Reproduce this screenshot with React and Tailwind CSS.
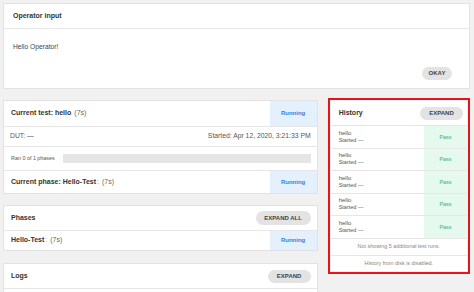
import React from "react";

const font = { fontFamily: '"Liberation Sans", Arial, sans-serif' };

const Pill = ({ children, className = "" }) => (
  <span
    className={`flex items-center justify-center rounded-full bg-[#e3e3e3] text-[6px] font-bold text-[#444] ${className}`}
  >
    {children}
  </span>
);

const Running = ({ className = "" }) => (
  <div
    className={`flex w-[47px] items-center justify-center bg-[#e4f0fd] text-[6px] font-bold text-[#3e7dd6] ${className}`}
  >
    Running
  </div>
);

const HistoryRow = () => (
  <div className="flex h-[22.5px] border-b border-[#e6e6e6]">
    <div className="flex flex-1 flex-col justify-center pl-[8px] leading-[7px] text-[#555]">
      <span className="text-[6px]">hello</span>
      <span className="text-[5.5px]">Started —</span>
    </div>
    <div className="flex w-[43px] items-center justify-center bg-[#e6f9ef] text-[5.5px] text-[#3bb273]">
      Pass
    </div>
  </div>
);

export default function App() {
  return (
    <div
      className="h-[292px] w-[474px] overflow-hidden bg-[#f1f1f1] pl-[3px] pr-[4px] pt-[3px]"
      style={font}
    >
      {/* operator input */}
      <div className="border border-[#e2e2e2] bg-white">
        <div className="flex h-[25px] items-center border-b border-[#e6e6e6] px-[9px] text-[7px] font-bold text-[#333]">
          Operator input
        </div>
        <div className="flex h-[59px] flex-col px-[9px]">
          <div className="pt-[13px] text-[6.7px] text-[#444]">Hello Operator!</div>
          <div className="mt-auto mb-[8px] flex justify-end pr-[8px]">
            <Pill className="h-[13px] w-[30px]">OKAY</Pill>
          </div>
        </div>
      </div>

      <div className="mt-[9px] flex">
        {/* left column */}
        <div className="w-[316px] pt-[2px]">
          <div className="border border-[#e2e2e2] bg-white">
            <div className="flex h-[26px] border-b border-[#e6e6e6]">
              <div className="flex flex-1 items-center px-[7px] text-[7px] text-[#333]">
                <span className="font-bold">Current test: hello</span>
                <span className="ml-[3px] text-[#666]">(7s)</span>
              </div>
              <Running />
            </div>
            <div className="flex h-[20px] items-center justify-between border-b border-[#e6e6e6] px-[6px] text-[6.8px] text-[#555]">
              <span>DUT: —</span>
              <span>Started: Apr 12, 2020, 3:21:33 PM</span>
            </div>
            <div className="flex h-[24px] items-center border-b border-[#e6e6e6] pl-[7px] pr-[6px]">
              <span className="w-[52px] text-[5.4px] text-[#555]">Ran 0 of 1 phases</span>
              <div className="h-[9px] flex-1 bg-[#e5e5e5]"></div>
            </div>
            <div className="flex h-[22px]">
              <div className="flex flex-1 items-center px-[7px] text-[7px] text-[#333]">
                <span className="font-bold">Current phase: Hello-Test</span>
                <span className="ml-[1px] text-[#999]">:</span>
                <span className="ml-[3px] text-[#666]">(7s)</span>
              </div>
              <Running />
            </div>
          </div>

          <div className="mt-[11px] border border-[#e2e2e2] bg-white">
            <div className="flex h-[25px] items-center justify-between border-b border-[#e6e6e6] pl-[7px] pr-[6px]">
              <span className="text-[7px] font-bold text-[#333]">Phases</span>
              <Pill className="h-[14px] w-[55px]">EXPAND ALL</Pill>
            </div>
            <div className="flex h-[19px]">
              <div className="flex flex-1 items-center px-[7px] text-[7px] text-[#333]">
                <span className="font-bold">Hello-Test</span>
                <span className="ml-[1px] text-[#999]">:</span>
                <span className="ml-[3px] text-[#666]">(7s)</span>
              </div>
              <Running />
            </div>
          </div>

          <div className="mt-[12px] border border-[#e2e2e2] bg-white">
            <div className="flex h-[25px] items-center justify-between border-b border-[#e6e6e6] pl-[7px] pr-[6px]">
              <span className="text-[7px] font-bold text-[#333]">Logs</span>
              <Pill className="h-[13px] w-[43px]">EXPAND</Pill>
            </div>
            <div className="h-[20px]"></div>
          </div>
        </div>

        {/* history, highlighted */}
        <div className="ml-[10px] w-[143px]">
          <div className="border-[2px] border-[#e3141c] p-[1px]">
            <div className="bg-white">
              <div className="flex h-[25px] items-center justify-between border-b border-[#e6e6e6] pl-[8px] pr-[4px]">
                <span className="text-[7px] font-bold text-[#333]">History</span>
                <Pill className="h-[13px] w-[43px]">EXPAND</Pill>
              </div>
              <HistoryRow />
              <HistoryRow />
              <HistoryRow />
              <HistoryRow />
              <HistoryRow />
              <div className="flex h-[17px] items-center justify-center border-b border-[#e6e6e6] text-[5.4px] text-[#888]">
                Not showing 5 additional test runs.
              </div>
              <div className="flex h-[15px] items-center justify-center text-[5.4px] text-[#888]">
                History from disk is disabled.
              </div>
            </div>
          </div>
        </div>
      </div>
    </div>
  );
}
